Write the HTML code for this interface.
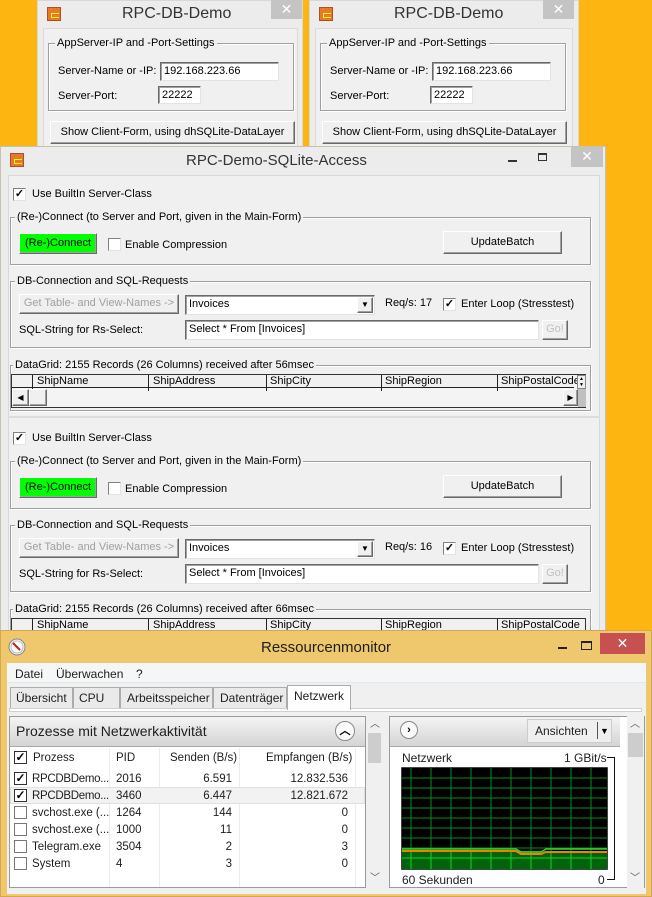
<!DOCTYPE html>
<html><head><meta charset="utf-8"><style>
*{box-sizing:border-box;margin:0;padding:0}
body{width:652px;height:897px;overflow:hidden;background:#fdb512;position:relative;font-family:"Liberation Sans",sans-serif;font-size:11px;color:#000}
.a{position:absolute}
.t{position:absolute;white-space:nowrap;line-height:14px}
.grp{position:absolute;border:1px solid #a0a0a0;box-shadow:1px 1px 0 #fff inset,1px 1px 0 #fff}
.gl{position:absolute;top:-8px;left:6px;background:#f0f0f0;padding:0 2px;white-space:nowrap;line-height:14px}
.inp{position:absolute;background:#fff;border:1px solid;border-color:#696969 #e3e3e3 #e3e3e3 #696969;box-shadow:1px 1px 0 #a0a0a0 inset;padding:2px 3px;line-height:13px;white-space:nowrap}
.btn{position:absolute;background:#f0f0f0;border:1px solid;border-color:#fff #696969 #696969 #fff;box-shadow:-1px -1px 0 #a0a0a0 inset;text-align:center;white-space:nowrap}
.cb{position:absolute;width:13px;height:13px;background:#fff;border:1px solid;border-color:#808080 #e3e3e3 #e3e3e3 #808080;font-size:11px;line-height:11px;text-align:center;font-weight:bold}
.icon{position:absolute;width:14px;height:14px;background:#e87830;border:1px solid #b05020}
.icon:after{content:"";position:absolute;left:3px;top:5px;width:7px;height:3px;border:1px solid #ff0;border-right:none}
.rm{font-size:12px;color:#1e1e1e}
.rr{font-size:11.5px}
.cbr{position:absolute;width:13px;height:13px;border:1px solid #333;background:#fff;font-size:12px;line-height:11px;text-align:center;font-weight:bold}
</style></head><body>

<!-- window A -->
<div class="a" style="left:37px;top:0;width:266px;height:148px;background:#ececec;border:1px solid #d8d8d8"></div>
<div class="icon" style="left:47px;top:7px"></div>
<div class="t" style="left:122px;top:5px;font-size:16px;line-height:18px;color:#333">RPC-DB-Demo</div>
<div class="a" style="left:271px;top:0;width:31px;height:19px;background:#c4c4c4;color:#fff;text-align:center;font-size:14px;line-height:18px">✕</div>
<div class="a" style="left:43px;top:28px;width:255px;height:120px;background:#f0f0f0;border:1px solid #dadada"></div>
<div class="grp" style="left:48px;top:43px;width:246px;height:68px"><div class="gl">AppServer-IP and -Port-Settings</div></div>
<div class="t" style="left:58px;top:64px">Server-Name or -IP:</div>
<div class="inp" style="left:160px;top:62px;width:119px;height:19px">192.168.223.66</div>
<div class="t" style="left:58px;top:89px">Server-Port:</div>
<div class="inp" style="left:158px;top:86px;width:43px;height:18px">22222</div>
<div class="btn" style="left:50px;top:121px;width:245px;height:23px;line-height:20px">Show Client-Form, using dhSQLite-DataLayer</div>

<!-- window B -->
<div class="a" style="left:309px;top:0;width:270px;height:148px;background:#ececec;border:1px solid #d8d8d8"></div>
<div class="icon" style="left:319px;top:7px"></div>
<div class="t" style="left:394px;top:5px;font-size:16px;line-height:18px;color:#333">RPC-DB-Demo</div>
<div class="a" style="left:543px;top:0;width:31px;height:19px;background:#c4c4c4;color:#fff;text-align:center;font-size:14px;line-height:18px">✕</div>
<div class="a" style="left:315px;top:28px;width:258px;height:120px;background:#f0f0f0;border:1px solid #dadada"></div>
<div class="grp" style="left:320px;top:43px;width:246px;height:68px"><div class="gl">AppServer-IP and -Port-Settings</div></div>
<div class="t" style="left:330px;top:64px">Server-Name or -IP:</div>
<div class="inp" style="left:432px;top:62px;width:119px;height:19px">192.168.223.66</div>
<div class="t" style="left:330px;top:89px">Server-Port:</div>
<div class="inp" style="left:430px;top:86px;width:43px;height:18px">22222</div>
<div class="btn" style="left:322px;top:121px;width:245px;height:23px;line-height:20px">Show Client-Form, using dhSQLite-DataLayer</div>

<!-- main window -->
<div class="a" style="left:0;top:146px;width:606px;height:490px;background:#ececec;border:1px solid #c8c0b0"></div>
<div class="icon" style="left:10px;top:153px"></div>
<div class="t" style="left:186px;top:152px;font-size:15px;line-height:18px;color:#333">RPC-Demo-SQLite-Access</div>
<div class="a" style="left:508px;top:160px;width:9px;height:2px;background:#333"></div>
<div class="a" style="left:538px;top:153px;width:9px;height:8px;border:1px solid #333;border-top-width:2px"></div>
<div class="a" style="left:571px;top:147px;width:32px;height:20px;background:#c4c4c4;color:#fff;text-align:center;font-size:14px;line-height:19px">✕</div>
<div class="a" style="left:8px;top:175px;width:592px;height:460px;background:#f0f0f0;border:1px solid #d8d8d8"></div>
<div class="a" style="left:8px;top:416px;width:592px;height:2px;background:#dcdcdc"></div>

<!-- panel 1 -->
<div class="cb" style="left:13px;top:188px">✓</div>
<div class="t" style="left:32px;top:187px">Use BuiltIn Server-Class</div>
<div class="grp" style="left:10px;top:217px;width:581px;height:48px"><div class="gl" style="left:4px">(Re-)Connect (to Server and Port, given in the Main-Form)</div></div>
<div class="btn" style="left:19px;top:233px;width:78px;height:21px;background:#00ff00;line-height:18px">(Re-)Connect</div>
<div class="cb" style="left:108px;top:238px"></div>
<div class="t" style="left:125px;top:238px">Enable Compression</div>
<div class="btn" style="left:443px;top:231px;width:119px;height:23px;line-height:20px">UpdateBatch</div>
<div class="grp" style="left:10px;top:281px;width:581px;height:67px"><div class="gl" style="left:4px">DB-Connection and SQL-Requests</div></div>
<div class="btn" style="left:19px;top:294px;width:160px;height:20px;color:#a0a0a0;line-height:17px">Get Table- and View-Names -&gt;</div>
<div class="inp" style="left:185px;top:295px;width:190px;height:20px">Invoices</div>
<div class="btn" style="left:357px;top:297px;width:16px;height:16px;font-size:8px;line-height:14px">▼</div>
<div class="t" style="left:385px;top:296px">Req/s: 17</div>
<div class="cb" style="left:443px;top:298px">✓</div>
<div class="t" style="left:461px;top:297px">Enter Loop (Stresstest)</div>
<div class="t" style="left:19px;top:323px">SQL-String for Rs-Select:</div>
<div class="inp" style="left:185px;top:320px;width:354px;height:20px">Select * From [Invoices]</div>
<div class="btn" style="left:542px;top:320px;width:26px;height:20px;color:#c0c0c0;line-height:17px">Go!</div>
<div class="grp" style="left:10px;top:365px;width:581px;height:46px"><div class="gl" style="left:2px">DataGrid: 2155 Records (26 Columns) received after 56msec</div></div>
<div class="a" style="left:11px;top:374px;width:575px;height:34px;background:#f4f4f4;border:1px solid #333"></div>
<div class="a" style="left:12px;top:375px;width:562px;height:13px;border-bottom:1px solid #222;background:#f0f0f0"></div>
<div class="a" style="left:32px;top:375px;width:1px;height:16px;background:#222"></div>
<div class="t" style="left:37px;top:374px">ShipName</div>
<div class="a" style="left:148px;top:375px;width:1px;height:16px;background:#222"></div>
<div class="t" style="left:153px;top:374px">ShipAddress</div>
<div class="a" style="left:266px;top:375px;width:1px;height:16px;background:#222"></div>
<div class="t" style="left:270px;top:374px">ShipCity</div>
<div class="a" style="left:381px;top:375px;width:1px;height:16px;background:#222"></div>
<div class="t" style="left:385px;top:374px">ShipRegion</div>
<div class="a" style="left:497px;top:375px;width:1px;height:16px;background:#222"></div>
<div class="t" style="left:501px;top:374px">ShipPostalCode</div>
<div class="a" style="left:577px;top:375px;width:9px;height:14px;background:#f0f0f0;border:1px solid #888;font-size:5px;line-height:6px;text-align:center">▲<br>▼</div>
<div class="btn" style="left:12px;top:389px;width:17px;height:17px;font-size:8px;line-height:15px">◀</div>
<div class="btn" style="left:29px;top:389px;width:18px;height:17px"></div>
<div class="btn" style="left:563px;top:389px;width:15px;height:17px;font-size:8px;line-height:15px">▶</div>
<div class="a" style="left:578px;top:389px;width:8px;height:18px;background:#c0c0c0"></div>

<!-- panel 2 (offset 244) -->
<div class="cb" style="left:13px;top:432px">✓</div>
<div class="t" style="left:32px;top:431px">Use BuiltIn Server-Class</div>
<div class="grp" style="left:10px;top:461px;width:581px;height:48px"><div class="gl" style="left:4px">(Re-)Connect (to Server and Port, given in the Main-Form)</div></div>
<div class="btn" style="left:19px;top:477px;width:78px;height:21px;background:#00ff00;line-height:18px">(Re-)Connect</div>
<div class="cb" style="left:108px;top:482px"></div>
<div class="t" style="left:125px;top:482px">Enable Compression</div>
<div class="btn" style="left:443px;top:475px;width:119px;height:23px;line-height:20px">UpdateBatch</div>
<div class="grp" style="left:10px;top:525px;width:581px;height:67px"><div class="gl" style="left:4px">DB-Connection and SQL-Requests</div></div>
<div class="btn" style="left:19px;top:538px;width:160px;height:20px;color:#a0a0a0;line-height:17px">Get Table- and View-Names -&gt;</div>
<div class="inp" style="left:185px;top:539px;width:190px;height:20px">Invoices</div>
<div class="btn" style="left:357px;top:541px;width:16px;height:16px;font-size:8px;line-height:14px">▼</div>
<div class="t" style="left:385px;top:540px">Req/s: 16</div>
<div class="cb" style="left:443px;top:542px">✓</div>
<div class="t" style="left:461px;top:541px">Enter Loop (Stresstest)</div>
<div class="t" style="left:19px;top:567px">SQL-String for Rs-Select:</div>
<div class="inp" style="left:185px;top:564px;width:354px;height:20px">Select * From [Invoices]</div>
<div class="btn" style="left:542px;top:564px;width:26px;height:20px;color:#c0c0c0;line-height:17px">Go!</div>
<div class="grp" style="left:10px;top:609px;width:581px;height:40px"><div class="gl" style="left:2px">DataGrid: 2155 Records (26 Columns) received after 66msec</div></div>
<div class="a" style="left:11px;top:618px;width:575px;height:20px;background:#f0f0f0;border:1px solid #333"></div>
<div class="a" style="left:32px;top:619px;width:1px;height:16px;background:#222"></div>
<div class="t" style="left:37px;top:618px">ShipName</div>
<div class="a" style="left:148px;top:619px;width:1px;height:16px;background:#222"></div>
<div class="t" style="left:153px;top:618px">ShipAddress</div>
<div class="a" style="left:266px;top:619px;width:1px;height:16px;background:#222"></div>
<div class="t" style="left:270px;top:618px">ShipCity</div>
<div class="a" style="left:381px;top:619px;width:1px;height:16px;background:#222"></div>
<div class="t" style="left:385px;top:618px">ShipRegion</div>
<div class="a" style="left:497px;top:619px;width:1px;height:16px;background:#222"></div>
<div class="t" style="left:501px;top:618px">ShipPostalCode</div>

<!-- Resource monitor -->
<div class="a rm" style="left:0;top:630px;width:652px;height:267px;background:#efc76d;border:1px solid #d4a850"></div>
<svg class="a" style="left:8px;top:638px" width="18" height="18"><circle cx="9" cy="9" r="8" fill="#f4f4f4" stroke="#888"/><circle cx="9" cy="9" r="6" fill="#fff" stroke="#bbb"/><path d="M5 5 L12 12" stroke="#c02020" stroke-width="2"/></svg>
<div class="t rm" style="left:261px;top:639px;font-size:15px;line-height:18px">Ressourcenmonitor</div>
<div class="a" style="left:558px;top:647px;width:9px;height:2px;background:#222"></div>
<div class="a" style="left:581px;top:641px;width:11px;height:9px;border:1px solid #222;border-top-width:2px"></div>
<div class="a" style="left:600px;top:633px;width:45px;height:21px;background:#c75050;color:#fff;text-align:center;font-size:14px;line-height:21px">✕</div>
<div class="a" style="left:7px;top:663px;width:639px;height:231px;background:#f0f0f0"></div>
<div class="a" style="left:7px;top:663px;width:639px;height:20px;background:#f5f6f7;border-bottom:1px solid #e6e6e6"></div>
<div class="t rm" style="left:15px;top:667px">Datei</div>
<div class="t rm" style="left:56px;top:667px">Überwachen</div>
<div class="t rm" style="left:136px;top:667px">?</div>
<div class="a" style="left:10px;top:687px;width:63px;height:22px;border:1px solid #acacac;background:#eaeaea"></div><div class="t rm" style="left:16px;top:691px">Übersicht</div>
<div class="a" style="left:73px;top:687px;width:47px;height:22px;border:1px solid #acacac;background:#eaeaea"></div><div class="t rm" style="left:79px;top:691px">CPU</div>
<div class="a" style="left:120px;top:687px;width:93px;height:22px;border:1px solid #acacac;background:#eaeaea"></div><div class="t rm" style="left:127px;top:691px">Arbeitsspeicher</div>
<div class="a" style="left:213px;top:687px;width:74px;height:22px;border:1px solid #acacac;background:#eaeaea"></div><div class="t rm" style="left:220px;top:691px">Datenträger</div>
<div class="a" style="left:9px;top:708px;width:633px;height:4px;border:1px solid #d0d0d0;background:#fff"></div>
<div class="a" style="left:287px;top:685px;width:64px;height:25px;border:1px solid #acacac;border-bottom:none;background:#fff"></div><div class="t rm" style="left:294px;top:689px">Netzwerk</div>

<!-- left panel -->
<div class="a" style="left:9px;top:716px;width:357px;height:172px;background:#fff;border:1px solid #9a9a9a"></div>
<div class="a" style="left:10px;top:717px;width:355px;height:30px;background:linear-gradient(#f4f4f4,#d4d4d4);border-bottom:1px solid #aaa"></div>
<div class="t rm" style="left:16px;top:723px;font-size:14px;line-height:17px">Prozesse mit Netzwerkaktivität</div>
<div class="a" style="left:335px;top:721px;width:20px;height:20px;border-radius:50%;border:1px solid #888;background:#fafafa;text-align:center;font-size:11px;line-height:19px;font-weight:bold">︿</div>
<div class="a" style="left:109px;top:748px;width:1px;height:139px;background:#ececec"></div>
<div class="a" style="left:159px;top:748px;width:1px;height:139px;background:#ececec"></div>
<div class="a" style="left:239px;top:748px;width:1px;height:139px;background:#ececec"></div>
<div class="a" style="left:355px;top:748px;width:1px;height:139px;background:#ececec"></div>
<div class="a" style="left:10px;top:787px;width:355px;height:17px;background:#f2f2f2;border:1px solid #e0e0e0"></div>
<div class="cbr" style="left:14px;top:751px">✓</div><div class="t rm rr" style="left:33px;top:751px">Prozess</div><div class="t rm rr" style="left:116px;top:751px">PID</div><div class="t rm rr" style="left:170px;top:751px">Senden (B/s)</div><div class="t rm rr" style="left:266px;top:751px">Empfangen (B/s)</div>

<div class="cbr" style="left:14px;top:772px">✓</div><div class="t rm rr" style="left:32px;top:772px;letter-spacing:-0.3px">RPCDBDemo...</div><div class="t rm rr" style="left:116px;top:772px">2016</div><div class="t rm rr" style="left:190px;top:772px;width:42px;text-align:right">6.591</div><div class="t rm rr" style="left:258px;top:772px;width:90px;text-align:right">12.832.536</div>
<div class="cbr" style="left:14px;top:789px">✓</div><div class="t rm rr" style="left:32px;top:789px;letter-spacing:-0.3px">RPCDBDemo...</div><div class="t rm rr" style="left:116px;top:789px">3460</div><div class="t rm rr" style="left:190px;top:789px;width:42px;text-align:right">6.447</div><div class="t rm rr" style="left:258px;top:789px;width:90px;text-align:right">12.821.672</div>
<div class="cbr" style="left:14px;top:806px;border-color:#777"></div><div class="t rm rr" style="left:32px;top:806px">svchost.exe (...</div><div class="t rm rr" style="left:116px;top:806px">1264</div><div class="t rm rr" style="left:190px;top:806px;width:42px;text-align:right">144</div><div class="t rm rr" style="left:258px;top:806px;width:90px;text-align:right">0</div>
<div class="cbr" style="left:14px;top:823px;border-color:#777"></div><div class="t rm rr" style="left:32px;top:823px">svchost.exe (...</div><div class="t rm rr" style="left:116px;top:823px">1000</div><div class="t rm rr" style="left:190px;top:823px;width:42px;text-align:right">11</div><div class="t rm rr" style="left:258px;top:823px;width:90px;text-align:right">0</div>
<div class="cbr" style="left:14px;top:840px;border-color:#777"></div><div class="t rm rr" style="left:32px;top:840px">Telegram.exe</div><div class="t rm rr" style="left:116px;top:840px">3504</div><div class="t rm rr" style="left:190px;top:840px;width:42px;text-align:right">2</div><div class="t rm rr" style="left:258px;top:840px;width:90px;text-align:right">3</div>
<div class="cbr" style="left:14px;top:857px;border-color:#777"></div><div class="t rm rr" style="left:32px;top:857px">System</div><div class="t rm rr" style="left:116px;top:857px">4</div><div class="t rm rr" style="left:190px;top:857px;width:42px;text-align:right">3</div><div class="t rm rr" style="left:258px;top:857px;width:90px;text-align:right">0</div>

<div class="a" style="left:367px;top:716px;width:15px;height:172px;background:#f0f0f0"></div>
<div class="t" style="left:370px;top:718px;font-size:10px;color:#555">︿</div>
<div class="a" style="left:368px;top:733px;width:13px;height:30px;background:#cdcdcd"></div>
<div class="t" style="left:370px;top:872px;font-size:10px;color:#555">﹀</div>

<!-- right panel -->
<div class="a" style="left:389px;top:716px;width:256px;height:172px;background:#fff;border:1px solid #9a9a9a"></div>
<div class="a" style="left:390px;top:717px;width:230px;height:30px;background:linear-gradient(#f4f4f4,#d4d4d4);border-bottom:1px solid #aaa"></div>
<div class="a" style="left:400px;top:721px;width:18px;height:18px;border-radius:50%;border:1px solid #888;background:#fafafa;text-align:center;font-size:11px;line-height:16px;font-weight:bold">›</div>
<div class="a" style="left:527px;top:719px;width:85px;height:24px;background:#efefef;border:1px solid #ccc"></div>
<div class="t rm" style="left:535px;top:724px">Ansichten</div>
<div class="a" style="left:597px;top:722px;width:1px;height:17px;background:#555"></div>
<div class="t" style="left:600px;top:724px;font-size:9px">▼</div>
<div class="t rm" style="left:402px;top:751px">Netzwerk</div>
<div class="t rm" style="left:564px;top:751px">1 GBit/s</div>
<div class="a" style="left:607px;top:757px;width:8px;height:123px;border:1px solid #111;border-left:none"></div>
<svg class="a" style="left:401px;top:767px" width="207" height="103">
<rect width="207" height="103" fill="#000" stroke="#888"/>
<rect x="1" y="84" width="205" height="18" fill="#00640a"/>
<g stroke="#0a8a1e" stroke-width="1">
<path d="M10 1V102M30 1V102M50 1V102M70 1V102M90 1V102M110 1V102M130 1V102M150 1V102M170 1V102M190 1V102"/>
<path d="M1 11H206M1 21H206M1 31H206M1 41H206M1 51H206M1 61H206M1 71H206M1 81H206M1 91H206"/>
</g>
<g stroke="#19d02a"><path d="M10 84V102M30 84V102M50 84V102M70 84V102M90 84V102M110 84V102M130 84V102M150 84V102M170 84V102M190 84V102M1 91H206"/></g>
<path d="M1 82H115L120 85H140L145 82H206" stroke="#22e034" stroke-width="1.5" fill="none"/>
<path d="M1 84H115L120 87H140L145 85H206" stroke="#ff7800" stroke-width="2" fill="none"/>
</svg>
<div class="t rm" style="left:402px;top:873px">60 Sekunden</div>
<div class="t rm" style="left:598px;top:873px">0</div>
<div class="a" style="left:627px;top:716px;width:17px;height:172px;background:#f0f0f0"></div>
<div class="t" style="left:630px;top:718px;font-size:10px;color:#555">︿</div>
<div class="a" style="left:628px;top:733px;width:15px;height:24px;background:#cdcdcd"></div>
<div class="t" style="left:630px;top:872px;font-size:10px;color:#555">﹀</div>
</body></html>
